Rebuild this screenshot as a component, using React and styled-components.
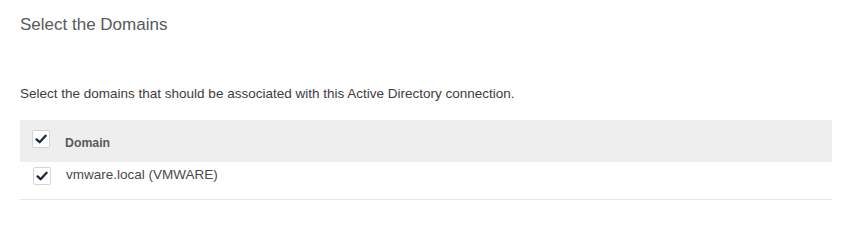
import React, { useState } from 'react'
import styled, { createGlobalStyle } from 'styled-components'

const GlobalStyle = createGlobalStyle`
  body {
    margin: 0;
    background: #fff;
    font-family: "Liberation Sans", Arial, sans-serif;
  }
`

function CheckBox({ checked, onToggle }) {
  return (
    <Box onClick={onToggle}>
      {checked && (
        <svg width="12" height="10" viewBox="0 0 12 10">
          <path d="M1.6 5.4 L4.6 8.2 L10.6 1.8" fill="none" stroke="#1d2a3a" strokeWidth="2.3" strokeLinecap="round" strokeLinejoin="round" />
        </svg>
      )}
    </Box>
  )
}

function App() {
  const [rows, setRows] = useState([{ name: 'vmware.local (VMWARE)', checked: true }])
  const all = rows.every(r => r.checked)

  return (
    <Page>
      <GlobalStyle />
      <Title>Select the Domains</Title>
      <Desc>Select the domains that should be associated with this Active Directory connection.</Desc>
      <Table>
        <HeadRow>
          <CheckBox checked={all} onToggle={() => setRows(rows.map(r => ({ ...r, checked: !all })))} />
          <HeadLabel>Domain</HeadLabel>
        </HeadRow>
        {rows.map((r, i) => (
          <Row key={i}>
            <CheckBox checked={r.checked} onToggle={() => setRows(rows.map((x, j) => j === i ? { ...x, checked: !x.checked } : x))} />
            <Cell>{r.name}</Cell>
          </Row>
        ))}
      </Table>
    </Page>
  )
}

export default App

const Page = styled.div`
  padding: 15px 18px 0 20px;
`

const Title = styled.h2`
  margin: 0;
  font-size: 17px;
  font-weight: normal;
  color: #565a5e;
  line-height: 20px;
`

const Desc = styled.p`
  margin: 51px 0 0;
  font-size: 13.5px;
  color: #3d3d3d;
  line-height: 16px;
`

const Table = styled.div`
  margin-top: 18px;
  display: flex;
  flex-direction: column;
`

const HeadRow = styled.div`
  height: 42px;
  box-sizing: border-box;
  background: #eeeeee;
  display: flex;
  align-items: flex-start;
  padding: 10px 0 0 12px;
  gap: 15px;
`

const Row = styled.div`
  height: 38px;
  display: flex;
  align-items: flex-start;
  padding: 5px 0 0 13px;
  box-sizing: border-box;
  gap: 15px;
  border-bottom: 1px solid #e6e6e6;
`

const Box = styled.div`
  width: 18px;
  height: 18px;
  box-sizing: border-box;
  background: #fff;
  border: 1px solid #d4d4d4;
  border-radius: 2px;
  display: flex;
  align-items: center;
  justify-content: center;
  cursor: pointer;
  flex-shrink: 0;
`

const HeadLabel = styled.span`
  font-size: 12.3px;
  font-weight: bold;
  color: #5a5a5a;
  line-height: 16px;
  margin-top: 5px;
`

const Cell = styled.span`
  font-size: 13.5px;
  color: #4a4a4a;
  line-height: 16px;
`
